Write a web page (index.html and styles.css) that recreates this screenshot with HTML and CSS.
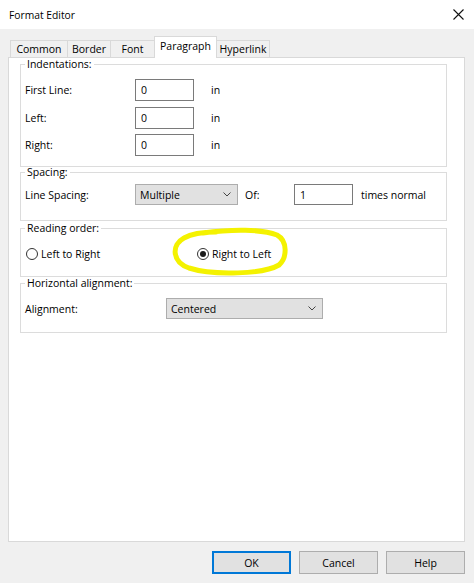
FILE: index.html
```html
<!DOCTYPE html>
<html>
<head>
<meta charset="utf-8">
<link rel="stylesheet" href="styles.css">
</head>
<body>
<div class="window">
  <div class="titlebar">
    <span class="title">Format Editor</span>
    <svg class="close" width="11" height="11" viewBox="0 0 11 11"><path d="M0.5 0.5 L10.5 10.5 M10.5 0.5 L0.5 10.5" stroke="#111" stroke-width="1.1" fill="none"/></svg>
  </div>
  <div class="client">
    <div class="tabs">
      <div class="tab t-common">Common</div>
      <div class="tab t-border">Border</div>
      <div class="tab t-font">Font</div>
      <div class="tab t-para selected">Paragraph</div>
      <div class="tab t-link last">Hyperlink</div>
    </div>
    <div class="panel">
      <fieldset class="group g-indent">
        <legend>Indentations:</legend>
        <div class="rows">
          <div class="row"><span class="lbl">First Line:</span><span class="edit">0</span><span class="unit">in</span></div>
          <div class="row"><span class="lbl">Left:</span><span class="edit">0</span><span class="unit">in</span></div>
          <div class="row"><span class="lbl">Right:</span><span class="edit">0</span><span class="unit">in</span></div>
        </div>
      </fieldset>
      <fieldset class="group g-spacing">
        <legend>Spacing:</legend>
        <div class="row short">
          <span class="lbl">Line Spacing:</span>
          <span class="combo narrow">Multiple<svg class="chev" width="8" height="5" viewBox="0 0 8 5"><path d="M0.5 0.5 L4 4 L7.5 0.5" stroke="#444" stroke-width="1" fill="none"/></svg></span>
          <span class="of">Of:</span>
          <span class="edit short-edit">1</span>
          <span class="unit2">times normal</span>
        </div>
      </fieldset>
      <fieldset class="group g-reading">
        <legend>Reading order:</legend>
        <div class="radios">
          <span class="opt first"><span class="radio"></span>Left to Right</span>
          <span class="opt"><span class="radio checked"></span>Right to Left</span>
        </div>
      </fieldset>
      <fieldset class="group g-align">
        <legend>Horizontal alignment:</legend>
        <div class="row short">
          <span class="lbl wide">Alignment:</span>
          <span class="combo widecombo">Centered<svg class="chev" width="8" height="5" viewBox="0 0 8 5"><path d="M0.5 0.5 L4 4 L7.5 0.5" stroke="#444" stroke-width="1" fill="none"/></svg></span>
        </div>
      </fieldset>
    </div>
    <div class="buttons">
      <button class="btn default">OK</button>
      <button class="btn">Cancel</button>
      <button class="btn">Help</button>
    </div>
  </div>
  <svg class="annotation" width="474" height="583" viewBox="0 0 474 583">
    <path d="M203 233 C232 229, 262 229, 277 235 C288 241, 287 258, 279 265 C264 274, 214 276, 189 268 C172 262, 171 245, 184 238 C191 234, 205 232, 216 232" stroke="#f4f200" stroke-width="5" fill="none" stroke-linecap="round" stroke-linejoin="round"/>
  </svg>
</div>
</body>
</html>
```

FILE: styles.css
```css
* { box-sizing: border-box; }
html, body { margin: 0; padding: 0; }
body {
  width: 474px;
  height: 583px;
  overflow: hidden;
  font-family: "Open Sans", "Noto Sans", "Liberation Sans", sans-serif;
  font-size: 10.5px;
  color: #000;
  background: #f0f0f0;
}
.window {
  position: relative;
  width: 474px;
  height: 583px;
  display: flex;
  flex-direction: column;
  background: #f0f0f0;
}
.titlebar {
  height: 29px;
  background: #fff;
  display: flex;
  align-items: center;
  justify-content: space-between;
  padding: 0 10px 0 9px;
  flex: none;
}
.title { font-size: 10.3px; color: #000; }
.close { display: block; }
.client {
  flex: 1;
  display: flex;
  flex-direction: column;
  padding: 7px 9px 0 8px;
}
.tabs {
  display: flex;
  align-items: flex-end;
  height: 21px;
  padding-left: 2px;
  flex: none;
}
.tab {
  height: 17px;
  padding: 0;
  border: 1px solid #d9d9d9;
  border-right: none;
  border-bottom: none;
  background: #f0f0f0;
  display: flex;
  align-items: center;
  justify-content: center;
  line-height: 1;
  white-space: nowrap;
  flex: none;
}
.t-common { width: 57px; }
.t-border { width: 43px; }
.t-font { width: 44px; }
.t-para { width: 63px; }
.t-link { width: 53px; }
.tab.last { border-right: 1px solid #d9d9d9; }
.tab.selected {
  position: relative;
  z-index: 2;
  height: 22px;
  margin-bottom: -1px;
  padding-bottom: 3px;
  background: #fff;
  border-right: 1px solid #d9d9d9;
}
.tab.selected + .tab { border-left: none; }
.panel {
  height: 485px;
  background: #fff;
  border: 1px solid #d9d9d9;
  display: flex;
  flex-direction: column;
  flex: none;
}
.group {
  margin: 0 17px 0 11px;
  border: 1px solid #dcdcdc;
  padding: 0 6px 0 4px;
  min-width: 0;
}
.group legend {
  padding: 0 2px;
  margin-left: 0;
  line-height: 12px;
  font-size: 10.5px;
}
.g-indent { padding-top: 9px; padding-bottom: 10px; }
.g-spacing { padding-top: 6px; padding-bottom: 15px; margin-top: -1px; }
.g-reading { padding-top: 12px; padding-bottom: 14px; margin-top: 1px; }
.g-align { padding-top: 9px; padding-bottom: 13px; }
.rows { display: flex; flex-direction: column; gap: 5.5px; }
.row { display: flex; align-items: center; height: 22px; }
.row.short { height: 21px; }
.lbl { width: 110px; flex: none; }
.lbl.wide { width: 141px; }
.edit {
  width: 59px;
  height: 22px;
  border: 1px solid #7a7a7a;
  background: #fff;
  display: flex;
  align-items: center;
  padding-left: 5px;
  flex: none;
}
.short-edit { height: 21px; }
.unit { margin-left: 17px; }
.combo {
  height: 21px;
  background: #e1e1e1;
  border: 1px solid #adadad;
  display: flex;
  align-items: center;
  justify-content: space-between;
  padding: 0 6px 0 4px;
  flex: none;
}
.combo.narrow { width: 103px; }
.combo.widecombo { width: 157px; }
.chev { display: block; }
.of { width: 56px; padding-left: 7px; flex: none; }
.unit2 { margin-left: 8px; }
.radios { display: flex; align-items: center; height: 16px; }
.opt { display: flex; align-items: center; }
.opt.first { width: 171px; margin-left: 1px; }
.radio {
  width: 12px;
  height: 12px;
  border: 1px solid #333;
  border-radius: 50%;
  background: #fff;
  margin-right: 3px;
  display: flex;
  align-items: center;
  justify-content: center;
  flex: none;
}
.radio.checked::after {
  content: "";
  width: 6px;
  height: 6px;
  border-radius: 50%;
  background: #1a1a1a;
}
.buttons {
  display: flex;
  justify-content: flex-end;
  gap: 8px;
  padding-top: 9px;
}
.btn {
  width: 79px;
  height: 23px;
  margin: 0;
  background: #e1e1e1;
  border: 1px solid #adadad;
  font-family: inherit;
  font-size: 10.5px;
  color: #000;
  padding: 0;
}
.btn.default {
  border: 1px solid #0078d7;
  box-shadow: inset 0 0 0 1px #0078d7;
}
.annotation {
  position: absolute;
  left: 0;
  top: 0;
  pointer-events: none;
}
```
